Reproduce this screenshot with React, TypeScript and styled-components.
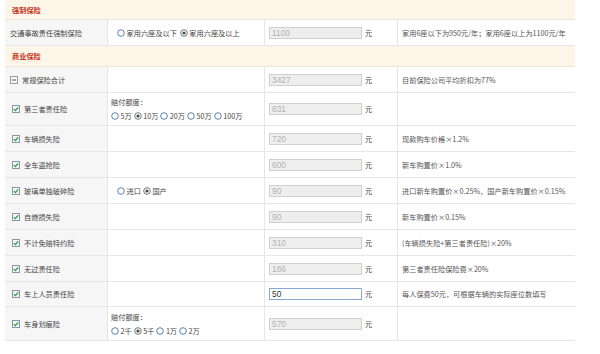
import React from "react";
import styled, { createGlobalStyle } from "styled-components";

const Global = createGlobalStyle`
  html, body { margin: 0; padding: 0; background: #fff; }
  body {
    font-family: "Noto Sans CJK SC", "Liberation Sans", sans-serif;
    font-size: 7.2px;
    color: #444;
  }
`;

const COLS = "103px 157px 133px 177px";
const LINE = "#e6e6e6";

const Page = styled.div`
  width: 570px;
  padding-left: 5px;
`;

const SectionHeader = styled.div<{ $h: number }>`
  box-sizing: border-box;
  height: ${(p) => p.$h}px;
  background: #fdf5e8;
  border-bottom: 1px solid #ece6da;
  display: flex;
  align-items: center;
  padding-left: 7px;
  font-weight: bold;
  color: #c4391d;
`;

const Row = styled.div<{ $h: number }>`
  box-sizing: border-box;
  display: grid;
  grid-template-columns: ${COLS};
  height: ${(p) => p.$h}px;
  border-bottom: 1px solid ${LINE};
`;

const LabelCell = styled.div<{ $pad?: number }>`
  background: #f6f6f6;
  border-right: 1px solid ${LINE};
  display: flex;
  align-items: center;
  gap: 4px;
  padding-left: ${(p) => p.$pad ?? 7}px;
  white-space: nowrap;
`;

const OptionCell = styled.div<{ $pad?: number }>`
  border-right: 1px solid ${LINE};
  display: flex;
  flex-direction: column;
  justify-content: center;
  gap: 4px;
  padding-left: ${(p) => p.$pad ?? 9}px;
  white-space: nowrap;
`;

const RadioLine = styled.div<{ $gap?: number }>`
  display: flex;
  align-items: center;
  gap: ${(p) => p.$gap ?? 2}px;
`;

const RadioItem = styled.span`
  display: inline-flex;
  align-items: center;
  gap: 1.5px;
`;

const AmountCell = styled.div`
  border-right: 1px solid ${LINE};
  display: flex;
  align-items: center;
  gap: 3px;
  padding-left: 4px;
`;

const Amount = styled.input<{ $active?: boolean }>`
  box-sizing: border-box;
  width: 93px;
  height: 12px;
  margin: 0;
  padding: 0 2px;
  border: 1px solid ${(p) => (p.$active ? "#86a9d4" : "#cfcfcf")};
  background: ${(p) => (p.$active ? "#fff" : "#eeeeee")};
  color: ${(p) => (p.$active ? "#333" : "#b3b3b3")};
  font-family: "Liberation Sans", Arial, sans-serif;
  font-size: 8.4px;
  outline: none;
`;

const Unit = styled.span`
  color: #444;
`;

const NoteCell = styled.div`
  display: flex;
  align-items: center;
  padding-left: 4px;
  color: #555;
  white-space: nowrap;
`;

const Check = () => (
  <svg width="8" height="8" viewBox="0 0 8 8">
    <rect x="0.5" y="0.5" width="7" height="7" fill="#f3f6f9" stroke="#8696aa" />
    <path d="M1.9 4.1 L3.4 5.6 L6.2 2.3" stroke="#2f9b35" strokeWidth="1.3" fill="none" />
  </svg>
);

const Minus = () => (
  <svg width="8" height="8" viewBox="0 0 8 8">
    <rect x="0.5" y="0.5" width="7" height="7" fill="#f7f7f7" stroke="#9a9a9a" />
    <path d="M2 4 H6" stroke="#555" strokeWidth="1" />
  </svg>
);

const Radio = ({ on }: { on?: boolean }) => (
  <svg width="8" height="8" viewBox="0 0 8 8">
    <circle cx="4" cy="4" r="3.3" fill="#fff" stroke={on ? "#5d6b6a" : "#4c74a3"} strokeWidth="0.9" />
    {on && <circle cx="4" cy="4" r="1.6" fill="#3c4f4a" />}
  </svg>
);

type Opt = { t: string; on?: boolean };

const Radios = ({ opts, gap }: { opts: Opt[]; gap?: number }) => (
  <RadioLine $gap={gap}>
    {opts.map((o) => (
      <RadioItem key={o.t}>
        <Radio on={o.on} />
        {o.t}
      </RadioItem>
    ))}
  </RadioLine>
);

type RowData = {
  label: string;
  h: number;
  value: string;
  note?: string;
  title?: string;
  opts?: Opt[];
  active?: boolean;
};

const rows: RowData[] = [
  {
    label: "第三者责任险",
    h: 33,
    value: "831",
    title: "赔付额度：",
    opts: [{ t: "5万" }, { t: "10万", on: true }, { t: "20万" }, { t: "50万" }, { t: "100万" }],
  },
  { label: "车辆损失险", h: 26, value: "720", note: "现款购车价格×1.2%" },
  { label: "全车盗抢险", h: 26, value: "600", note: "新车购置价×1.0%" },
  {
    label: "玻璃单独破碎险",
    h: 26,
    value: "90",
    opts: [{ t: "进口" }, { t: "国产", on: true }],
    note: "进口新车购置价×0.25%，国产新车购置价×0.15%",
  },
  { label: "自燃损失险", h: 26, value: "90", note: "新车购置价×0.15%" },
  { label: "不计免赔特约险", h: 26, value: "310", note: "(车辆损失险+第三者责任险)×20%" },
  { label: "无过责任险", h: 26, value: "166", note: "第三者责任险保险费×20%" },
  { label: "车上人员责任险", h: 25, value: "50", active: true, note: "每人保费50元，可根据车辆的实际座位数填写" },
  {
    label: "车身划痕险",
    h: 34,
    value: "570",
    title: "赔付额度：",
    opts: [{ t: "2千" }, { t: "5千", on: true }, { t: "1万" }, { t: "2万" }],
  },
];

export default function App() {
  return (
    <Page>
      <Global />
      <SectionHeader $h={20}>强制保险</SectionHeader>
      <Row $h={26}>
        <LabelCell $pad={5}>交通事故责任强制保险</LabelCell>
        <OptionCell>
          <Radios gap={3} opts={[{ t: "家用六座及以下" }, { t: "家用六座及以上", on: true }]} />
        </OptionCell>
        <AmountCell>
          <Amount readOnly value="1100" />
          <Unit>元</Unit>
        </AmountCell>
        <NoteCell>家用6座以下为950元/年；家用6座以上为1100元/年</NoteCell>
      </Row>
      <SectionHeader $h={21}>商业保险</SectionHeader>
      <Row $h={26}>
        <LabelCell $pad={5}>
          <Minus />
          常规保险合计
        </LabelCell>
        <OptionCell />
        <AmountCell>
          <Amount readOnly value="3427" />
          <Unit>元</Unit>
        </AmountCell>
        <NoteCell>目前保险公司平均折扣为77%</NoteCell>
      </Row>
      {rows.map((r) => (
        <Row key={r.label} $h={r.h}>
          <LabelCell>
            <Check />
            {r.label}
          </LabelCell>
          <OptionCell $pad={r.title ? 3 : 9}>
            {r.title && <div>{r.title}</div>}
            {r.opts && <Radios opts={r.opts} />}
          </OptionCell>
          <AmountCell>
            <Amount readOnly={!r.active} $active={r.active} defaultValue={r.value} />
            <Unit>元</Unit>
          </AmountCell>
          <NoteCell>{r.note}</NoteCell>
        </Row>
      ))}
    </Page>
  );
}
